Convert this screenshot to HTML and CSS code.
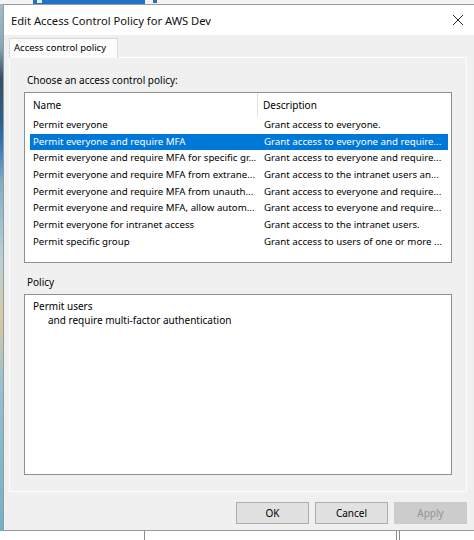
FILE: index.html
```html
<!DOCTYPE html>
<html lang="en">
<head>
<meta charset="utf-8">
<title>Edit Access Control Policy for AWS Dev</title>
<link rel="stylesheet" href="styles.css">
</head>
<body>
<div class="screen">
  <div class="top-strip">
    <span class="tb-gap"></span>
    <span class="tb-app"><span class="tb-icon"></span></span>
    <span class="tb-mini"></span>
  </div>
  <div class="middle">
    <div class="desk-left"></div>
    <div class="dialog">
      <div class="titlebar">
        <span class="title">Edit Access Control Policy for AWS Dev</span>
        <svg class="close" width="12" height="12" viewBox="0 0 12 12" aria-hidden="true">
          <path d="M1 1 L11 11 M11 1 L1 11" stroke="#222" stroke-width="1" fill="none"/>
        </svg>
      </div>
      <div class="dlg-body">
        <div class="tabs"><div class="tab">Access control policy</div></div>
        <div class="panel">
          <div class="label">Choose an access control policy:</div>
          <div class="listview">
            <div class="lv-header">
              <div class="hcol hname">Name</div>
              <div class="hcol hdesc">Description</div>
            </div>
            <div class="lv-rows">
              <div class="lv-row"><span class="c-name">Permit everyone</span><span class="c-desc">Grant access to everyone.</span></div>
              <div class="lv-row selected"><span class="c-name">Permit everyone and require MFA</span><span class="c-desc">Grant access to everyone and require...</span></div>
              <div class="lv-row"><span class="c-name">Permit everyone and require MFA for specific gr...</span><span class="c-desc">Grant access to everyone and require...</span></div>
              <div class="lv-row"><span class="c-name">Permit everyone and require MFA from extrane...</span><span class="c-desc">Grant access to the intranet users an...</span></div>
              <div class="lv-row"><span class="c-name">Permit everyone and require MFA from unauth...</span><span class="c-desc">Grant access to everyone and require...</span></div>
              <div class="lv-row"><span class="c-name">Permit everyone and require MFA, allow autom...</span><span class="c-desc">Grant access to everyone and require...</span></div>
              <div class="lv-row"><span class="c-name">Permit everyone for intranet access</span><span class="c-desc">Grant access to the intranet users.</span></div>
              <div class="lv-row"><span class="c-name">Permit specific group</span><span class="c-desc">Grant access to users of one or more ...</span></div>
            </div>
          </div>
          <div class="label label-policy">Policy</div>
          <div class="policybox">
            <div class="pline">Permit users</div>
            <div class="pline indent">and require multi-factor authentication</div>
          </div>
        </div>
        <div class="buttons">
          <div class="btn">OK</div>
          <div class="btn">Cancel</div>
          <div class="btn disabled">Apply</div>
        </div>
      </div>
    </div>
  </div>
  <div class="bottom-strip">
    <span class="bs-seg bs-a"></span>
    <span class="bs-seg bs-b"></span>
    <span class="bs-seg bs-c"></span>
  </div>
</div>
</body>
</html>
```
FILE: styles.css
```css
* { box-sizing: border-box; }
html, body { margin: 0; padding: 0; }
body {
  width: 474px;
  height: 540px;
  overflow: hidden;
  background: #fff;
  font-family: "Noto Sans", "Liberation Sans", sans-serif;
  font-size: 10px;
  color: #000;
}
.screen { width: 474px; height: 540px; display: flex; flex-direction: column; }

/* background taskbar-like strip */
.top-strip {
  height: 4px;
  display: flex;
  background: #f4f4f4;
  flex: none;
}
.tb-gap { width: 33px; }
.tb-app { width: 112px; background: #1f74c8; display: flex; padding-left: 4px; }
.tb-icon { width: 5px; height: 3px; background: #e8eef5; }
.tb-mini { width: 4px; height: 3px; background: #2a6fb8; margin-left: 8px; }

.middle { height: 527px; display: flex; flex: none; }
.desk-left {
  width: 3px;
  background: linear-gradient(to bottom, #9fbcc9 0, #8aa7b8 8%, #3a4d66 14%, #2f5f8f 22%, #2b74b9 26%, #7fb0c6 34%, #b7d0d6 48%, #d5c9a2 60%, #94c2d1 72%, #6fb2c7 100%);
}
.dialog {
  flex: 1;
  display: flex;
  flex-direction: column;
  border: 1px solid #9a9a9a;
  border-right: none;
  background: #f0f0f0;
}
.titlebar {
  height: 30px;
  background: #fff;
  display: flex;
  align-items: center;
  justify-content: space-between;
  padding: 0 10px 0 7px;
  flex: none;
}
.title { font-size: 11.2px; color: #111; }
.close { display: block; }

.dlg-body {
  flex: 1;
  padding: 3px 7px 5px 5px;
  display: flex;
  flex-direction: column;
}
.tabs { display: flex; height: 20px; position: relative; z-index: 1; margin-bottom: -1px; }
.tab {
  width: 109px;
  height: 20px;
  background: #fcfcfc;
  border: 1px solid #d9d9d9;
  border-bottom: none;
  padding-left: 4px;
  line-height: 18px;
  font-size: 9.5px;
}
.panel {
  height: 435px;
  border: 1px solid #fdfdfd;
  background: #f0f0f0;
  padding: 15px 14px 16px 14px;
  display: flex;
  flex-direction: column;
}
.label { height: 14px; line-height: 14px; padding-left: 3px; margin-bottom: 5px; }
.label-policy { margin-top: 12px; }

.listview {
  height: 171px;
  background: #fff;
  border: 1px solid #8f8f8f;
  flex: none;
}
.lv-header { display: flex; height: 24px; }
.hcol { line-height: 24px; }
.hname { width: 233px; padding-left: 8px; border-right: 1px solid #e3e3e3; }
.hdesc { flex: 1; padding-left: 5px; }
.lv-rows { padding: 0 3px 0 5px; }
.lv-row { display: flex; height: 16.67px; line-height: 16.67px; white-space: nowrap; font-size: 9.7px; }
.lv-row.selected { background: #0078d7; color: #fff; }
.c-name { width: 228px; padding-left: 3px; flex: none; }
.c-desc { flex: 1; padding-left: 6px; }

.policybox {
  height: 181px;
  background: #fff;
  border: 1px solid #8f8f8f;
  padding: 5px 8px;
  flex: none;
}
.pline { line-height: 13.5px; }
.pline.indent { padding-left: 15px; }

.buttons {
  margin-top: 10px;
  display: flex;
  justify-content: flex-end;
  gap: 6px;
}
.btn {
  width: 73px;
  height: 22px;
  background: #e1e1e1;
  border: 1px solid #adadad;
  text-align: center;
  line-height: 20px;
}
.btn.disabled { background: #cccccc; border-color: #cccccc; color: #939393; }

.bottom-strip { flex: 1; display: flex; background: #fff; }
.bs-seg { height: 100%; }
.bs-a { width: 145px; border-right: 1px solid #8a8a8a; }
.bs-b { width: 252px; border-right: 1px solid #8a8a8a; }
.bs-c { width: 3px; border-right: 1px solid #8a8a8a; }
```
